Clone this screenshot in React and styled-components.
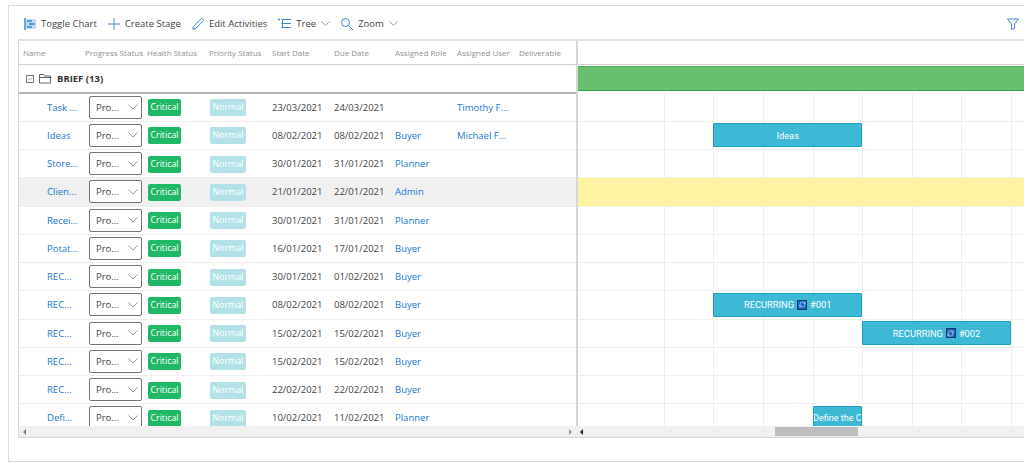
import React from 'react';
import styled, { createGlobalStyle } from 'styled-components';
import { Minus, RefreshCw } from 'lucide-react';

const GlobalStyle = createGlobalStyle`
  html, body {
    margin: 0;
    height: 100%;
    background: #fff;
    overflow: hidden;
  }

  body {
    font-family: 'Open Sans', 'Noto Sans', sans-serif;
  }
`;

const Page = styled.div`
  height: 465px;
  padding: 5px 0 3px 8px;
  box-sizing: border-box;
`;

const Panel = styled.div`
  height: 457px;
  box-sizing: border-box;
  border: 1px solid #dcdcdc;
  border-right: none;
  padding-left: 9px;
  display: flex;
  flex-direction: column;
`;

const Toolbar = styled.div`
  height: 33px;
  flex: none;
  display: flex;
  align-items: center;
  gap: 11px;
  padding: 2px 0 0 6px;
  box-sizing: border-box;
  color: #444;
  font-size: 9.5px;
`;

const ToolItem = styled.div`
  display: flex;
  align-items: center;
  gap: 5px;
  white-space: nowrap;
`;

const FilterButton = styled.div`
  margin-left: auto;
  margin-right: 5px;
  display: flex;
`;

const Gantt = styled.div`
  height: 399px;
  flex: none;
  box-sizing: border-box;
  border: 1px solid #d6d6d6;
  border-right: none;
  border-top-width: 2px;
  border-top-color: #e2e2e2;
  display: flex;
  flex-direction: column;
  overflow: hidden;
`;

const Panes = styled.div`
  flex: 1;
  min-height: 0;
  display: flex;
`;

const GridPane = styled.div`
  width: 557px;
  flex: none;
  overflow: hidden;
`;

const ChartPane = styled.div`
  flex: 1;
  min-width: 0;
  overflow: hidden;
  border-left: 2px solid #d6d6d6;
`;

const cols = '62px 62px 62px 63px 62px 61px 62px 62px 61px';

const HeaderRow = styled.div`
  height: 24px;
  box-sizing: border-box;
  border-bottom: 1px solid #d0d0d0;
  display: grid;
  grid-template-columns: ${cols};
  align-items: center;
  color: #8f8f8f;
  font-size: 8px;
  white-space: nowrap;
`;

const HeaderCell = styled.div`
  padding-left: 4px;
`;

const GroupRow = styled.div`
  height: 28.5px;
  box-sizing: border-box;
  border-bottom: 2px solid #b5b5b5;
  display: flex;
  align-items: center;
  gap: 5px;
  padding: 1px 0 0 7px;
  font-size: 9.5px;
  font-weight: 700;
  color: #333;
`;

const Collapse = styled.span`
  width: 6px;
  height: 6px;
  border: 1px solid #777;
  display: flex;
  align-items: center;
  justify-content: center;
  color: #555;
`;

const Row = styled.div`
  height: 28.25px;
  box-sizing: border-box;
  border-bottom: 1px solid #eeeeee;
  display: grid;
  grid-template-columns: ${cols};
  align-items: center;
  font-size: 9.5px;
  color: #444;
  background: ${(p) => (p.$selected ? '#f0f0f0' : '#fff')};
`;

const NameCell = styled.a`
  padding-left: 28px;
  color: #1a76d2;
  white-space: nowrap;
`;

const Cell = styled.div`
  padding-left: ${(p) => p.$pad ?? 4}px;
  white-space: nowrap;
`;

const LinkCell = styled(Cell)`
  color: #1a76d2;
`;

const StatusSelect = styled.div`
  width: 53px;
  height: 23px;
  margin-left: 8px;
  box-sizing: border-box;
  border: 1px solid #757575;
  border-radius: 2px;
  background: #fff;
  display: flex;
  align-items: center;
  justify-content: space-between;
  padding: 0 3px 0 6px;
  color: #444;
`;

const Badge = styled.span`
  display: block;
  width: fit-content;
  margin-top: 1px;
  padding: 0 2.5px;
  height: 17px;
  line-height: 17px;
  border-radius: 2px;
  font-size: 8.8px;
  font-weight: 500;
  color: #fff;
  background: ${(p) => p.$bg};
`;

const ChartHeader = styled.div`
  height: 24px;
  box-sizing: border-box;
  border-bottom: 1px solid #d0d0d0;
`;

const StageRow = styled.div`
  height: 28.5px;
  box-sizing: border-box;
  padding-top: 1px;
`;

const StageBar = styled.div`
  height: 25px;
  box-sizing: border-box;
  background: #66c06f;
  border-top: 1px solid #4fae59;
  border-bottom: 1px solid #36a143;
`;

const TimelineRow = styled.div`
  height: 28.25px;
  box-sizing: border-box;
  border-bottom: 1px solid #eeeeee;
  display: grid;
  grid-template-columns: 36px repeat(10, 49.63px);
  grid-template-rows: 1fr;
  align-items: center;
  background-color: ${(p) => (p.$selected ? '#fdf3a3' : '#fff')};
  background-image: ${(p) =>
    p.$selected
      ? 'none'
      : 'repeating-linear-gradient(90deg, transparent 0, transparent 48.63px, #eeeeee 48.63px, #eeeeee 49.63px)'};
  background-position: 37px 0;
`;

const TaskBar = styled.div`
  grid-column: ${(p) => p.$from} / ${(p) => p.$to};
  grid-row: 1;
  height: 24px;
  box-sizing: border-box;
  background: #3db8d5;
  border: 1px solid #1f9fbd;
  border-radius: 1px;
  display: flex;
  align-items: center;
  justify-content: center;
  gap: 3px;
  color: #fff;
  font-family: 'Roboto', 'Liberation Sans', sans-serif;
  font-size: ${(p) => (p.$narrow ? 9 : 9.3)}px;
  white-space: nowrap;
  overflow: hidden;
`;

const RecurIcon = styled.span`
  width: 8px;
  height: 8px;
  background: #1565c0;
  border: 1px solid #123a6e;
  display: flex;
  align-items: center;
  justify-content: center;
  color: #e6f4ff;
`;

const ScrollRow = styled.div`
  height: 11px;
  flex: none;
  display: flex;
  background: #f0f0f0;
`;

const ScrollTrack = styled.div`
  width: ${(p) => p.$w || 'auto'};
  flex: ${(p) => (p.$w ? 'none' : 1)};
  display: flex;
  align-items: center;
  justify-content: space-between;
  padding: 0 4px;
  box-sizing: border-box;
  position: relative;
`;

const Arrow = styled.span`
  width: 0;
  height: 0;
  border-top: 3px solid transparent;
  border-bottom: 3px solid transparent;
  border-left: ${(p) => (p.$right ? `3px solid ${p.$color}` : 'none')};
  border-right: ${(p) => (p.$right ? 'none' : `3px solid ${p.$color}`)};
`;

const Thumb = styled.div`
  position: absolute;
  left: 199px;
  top: 1px;
  width: 83px;
  height: 9px;
  background: #bdbdbd;
`;

const TaskList = [
  { name: 'Task ...', start: '23/03/2021', due: '24/03/2021', role: '', user: 'Timothy F...' },
  { name: 'Ideas', start: '08/02/2021', due: '08/02/2021', role: 'Buyer', user: 'Michael F...', bar: { from: 4, to: 7, label: 'Ideas' } },
  { name: 'Store...', start: '30/01/2021', due: '31/01/2021', role: 'Planner' },
  { name: 'Clien...', start: '21/01/2021', due: '22/01/2021', role: 'Admin', selected: true },
  { name: 'Recei...', start: '30/01/2021', due: '31/01/2021', role: 'Planner' },
  { name: 'Potat...', start: '16/01/2021', due: '17/01/2021', role: 'Buyer' },
  { name: 'REC...', start: '30/01/2021', due: '01/02/2021', role: 'Buyer' },
  { name: 'REC...', start: '08/02/2021', due: '08/02/2021', role: 'Buyer', bar: { from: 4, to: 7, label: 'RECURRING', num: '#001' } },
  { name: 'REC...', start: '15/02/2021', due: '15/02/2021', role: 'Buyer', bar: { from: 7, to: 10, label: 'RECURRING', num: '#002' } },
  { name: 'REC...', start: '15/02/2021', due: '15/02/2021', role: 'Buyer' },
  { name: 'REC...', start: '22/02/2021', due: '22/02/2021', role: 'Buyer' },
  { name: 'Defi...', start: '10/02/2021', due: '11/02/2021', role: 'Planner', bar: { from: 6, to: 7, label: 'Define the C', narrow: true } },
];

const headers = ['Name', 'Progress Status', 'Health Status', 'Priority Status', 'Start Date', 'Due Date', 'Assigned Role', 'Assigned User', 'Deliverable'];

const BLUE = '#3f86d8';

const ChartIcon = () => (
  <svg width="12" height="12" viewBox="0 0 12 12">
    <rect x="0" y="0" width="2" height="12" fill="#6aa3e2" />
    <rect x="2" y="1" width="10" height="10" fill="#c4daf3" />
    <path d="M3 2h5v2H3zM5 5h6v2H5zM3 8h5v2H3z" fill="#5a97dc" />
  </svg>
);

const PlusIcon = () => (
  <svg width="12" height="12" viewBox="0 0 12 12" stroke={BLUE} strokeWidth="1">
    <path d="M6 0v12M0 6h12" />
  </svg>
);

const PencilIcon = () => (
  <svg width="12" height="12" viewBox="0 0 12 12" fill="none" stroke={BLUE} strokeWidth="1">
    <path d="M0.7 11.3l0.8-3L9 0.9c.5-.5 1.200-.5 1.700 0l.4.4c.5.5.5 1.200 0 1.700L3.700 10.500z" />
  </svg>
);

const TreeIcon = () => (
  <svg width="13" height="11" viewBox="0 0 13 11" fill="none" stroke={BLUE} strokeWidth="1">
    <path d="M0 1.500h2M1 0.500v2M3.500 1.500h9.500M3.500 5.500h9.500M3.500 9.500h9.500M4.500 1.500v8" />
  </svg>
);

const SearchIcon = () => (
  <svg width="12" height="12" viewBox="0 0 12 12" fill="none" stroke={BLUE} strokeWidth="1">
    <circle cx="4.500" cy="4.500" r="4" />
    <path d="M7.500 7.500l4.500 4.500" />
  </svg>
);

const Chevron = ({ w = 9, color = '#888' }) => (
  <svg width={w} height={w * 0.6} viewBox="0 0 10 6" fill="none" stroke={color} strokeWidth="0.9">
    <path d="M0.500 0.500L5 5l4.500-4.500" />
  </svg>
);

const FunnelIcon = () => (
  <svg width="12" height="12" viewBox="0 0 12 12" fill="none" stroke={BLUE} strokeWidth="1">
    <path d="M0.500 1h11L7.500 6v4.500l-3 1V6z" />
  </svg>
);

const FolderIcon = () => (
  <svg width="13" height="11" viewBox="0 0 13 11" fill="none" stroke="#555" strokeWidth="0.9">
    <path d="M0.500 10V1.500h4l1 1.500h6v7zM0.500 4.500h12" />
  </svg>
);

const App = () => (
  <Page>
    <GlobalStyle />
    <Panel>
      <Toolbar>
        <ToolItem>
          <ChartIcon />
          Toggle Chart
        </ToolItem>
        <ToolItem>
          <PlusIcon />
          Create Stage
        </ToolItem>
        <ToolItem>
          <PencilIcon />
          Edit Activities
        </ToolItem>
        <ToolItem>
          <TreeIcon />
          Tree
          <Chevron />
        </ToolItem>
        <ToolItem>
          <SearchIcon />
          Zoom
          <Chevron />
        </ToolItem>
        <FilterButton>
          <FunnelIcon />
        </FilterButton>
      </Toolbar>

      <Gantt>
        <Panes>
          <GridPane>
            <HeaderRow>
              {headers.map((h) => (
                <HeaderCell key={h}>{h}</HeaderCell>
              ))}
            </HeaderRow>
            <GroupRow>
              <Collapse>
                <Minus size={6} strokeWidth={2} />
              </Collapse>
              <FolderIcon />
              BRIEF (13)
            </GroupRow>
            {TaskList.map((t, i) => (
              <Row key={i} $selected={t.selected}>
                <NameCell>{t.name}</NameCell>
                <Cell $pad={0}>
                  <StatusSelect>
                    Pro...
                    <Chevron w={10} />
                  </StatusSelect>
                </Cell>
                <Cell $pad={5}>
                  <Badge $bg="#1fb866">Critical</Badge>
                </Cell>
                <Cell $pad={5}>
                  <Badge $bg="#b2e2e8">Normal</Badge>
                </Cell>
                <Cell>{t.start}</Cell>
                <Cell>{t.due}</Cell>
                <LinkCell>{t.role}</LinkCell>
                <LinkCell>{t.user}</LinkCell>
                <Cell />
              </Row>
            ))}
          </GridPane>

          <ChartPane>
            <ChartHeader />
            <StageRow>
              <StageBar />
            </StageRow>
            {TaskList.map((t, i) => (
              <TimelineRow key={i} $selected={t.selected}>
                {t.bar && (
                  <TaskBar $from={t.bar.from} $to={t.bar.to} $narrow={t.bar.narrow}>
                    {t.bar.label}
                    {t.bar.num && (
                      <>
                        <RecurIcon>
                          <RefreshCw size={7} strokeWidth={2} />
                        </RecurIcon>
                        {t.bar.num}
                      </>
                    )}
                  </TaskBar>
                )}
              </TimelineRow>
            ))}
          </ChartPane>
        </Panes>

        <ScrollRow>
          <ScrollTrack $w="557px">
            <Arrow $color="#777" />
            <Arrow $right $color="#999" />
          </ScrollTrack>
          <ScrollTrack>
            <Arrow $color="#222" />
            <Thumb />
          </ScrollTrack>
        </ScrollRow>
      </Gantt>
    </Panel>
  </Page>
);

export default App;
